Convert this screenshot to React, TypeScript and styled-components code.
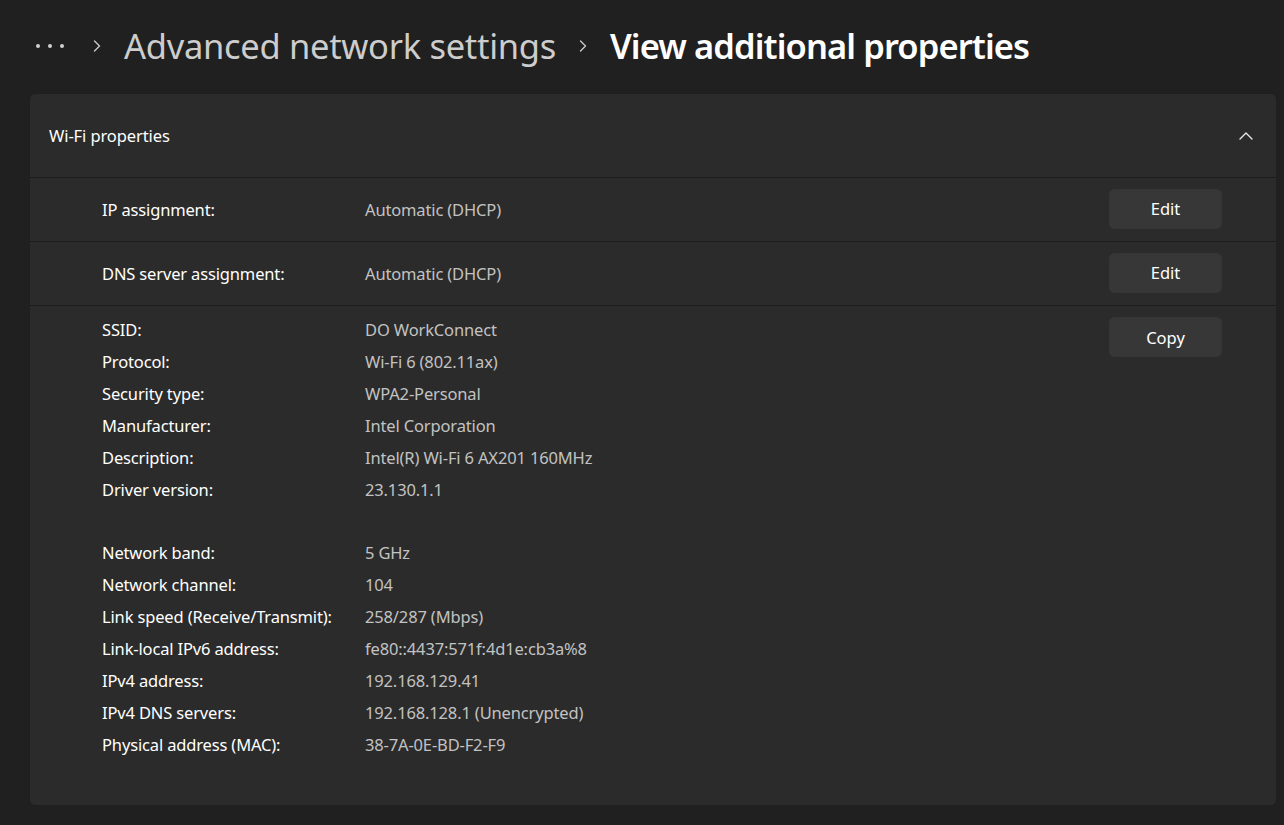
import React, { useState } from "react";
import styled, { createGlobalStyle } from "styled-components";

type Property = {
  label: string;
  value: string;
};

const GlobalStyle = createGlobalStyle`
  html, body {
    margin: 0;
    padding: 0;
    background: #202020;
  }
  body {
    font-family: "Segoe UI", "Noto Sans", "Open Sans", sans-serif;
    color: #ffffff;
    -webkit-font-smoothing: antialiased;
  }
`;

const Page = styled.div`
  width: 1284px;
  height: 825px;
  background: #202020;
  box-sizing: border-box;
  padding: 19px 7px 0 29px;
  overflow: hidden;
`;

const Breadcrumb = styled.nav`
  display: flex;
  align-items: center;
  height: 54px;
  margin-bottom: 20px;
`;

const MoreButton = styled.span`
  display: flex;
  align-items: center;
  gap: 8px;
  padding: 0 6px 0 7px;
  height: 30px;
`;

const Dot = styled.span`
  width: 4px;
  height: 4px;
  border-radius: 50%;
  background: #d0d0d0;
`;

const Crumb = styled.span<{ current?: boolean }>`
  font-size: ${({ current }) => (current ? "34.5px" : "34.5px")};
  font-weight: ${({ current }) => (current ? 600 : 400)};
  color: ${({ current }) => (current ? "#ffffff" : "#cdcdcd")};
  letter-spacing: ${({ current }) => (current ? "-0.9px" : "-0.3px")};
  line-height: 54px;
  white-space: nowrap;
`;

const Separator = styled.span`
  display: flex;
  align-items: center;
  justify-content: center;
  width: 54px;
`;

const Card = styled.section`
  width: 1248px;
  background: #2b2b2b;
  border: 1px solid #1f1f1f;
  border-radius: 6px;
  box-sizing: border-box;
`;

const CardHeader = styled.div`
  display: flex;
  align-items: center;
  justify-content: space-between;
  height: 83px;
  padding: 0 22px 0 19px;
  border-bottom: 1px solid #1c1c1c;
  font-size: 16.5px;
  letter-spacing: -0.1px;
`;

const ToggleIcon = styled.span`
  display: flex;
  width: 16px;
  justify-content: center;
`;

const Row = styled.div<{ divided?: boolean }>`
  display: flex;
  align-items: ${({ divided }) => (divided ? "center" : "flex-start")};
  min-height: ${({ divided }) => (divided ? "63px" : "auto")};
  padding: ${({ divided }) => (divided ? "0 54px 0 72px" : "8px 54px 44px 72px")};
  border-bottom: ${({ divided }) => (divided ? "1px solid #1c1c1c" : "none")};
`;

const PropertyGrid = styled.div`
  flex: 1;
  display: grid;
  grid-template-columns: 263px 1fr;
  font-size: 16.5px;
  letter-spacing: -0.15px;
  line-height: 32px;
`;

const Label = styled.span`
  color: #ffffff;
  white-space: nowrap;
`;

const Value = styled.span`
  color: #c2c2c2;
  white-space: nowrap;
`;

const Spacer = styled.div`
  grid-column: 1 / -1;
  height: 31px;
`;

const ActionButton = styled.button<{ offset?: number }>`
  width: 113px;
  height: 40px;
  margin-top: ${({ offset }) => offset ?? 0}px;
  margin-bottom: 2px;
  border: 1px solid #353535;
  border-radius: 5px;
  background: #373737;
  color: #ffffff;
  font-family: inherit;
  font-size: 16.5px;
  cursor: pointer;
  flex-shrink: 0;
`;

const ChevronRight = () => (
  <svg width="10" height="14" viewBox="0 0 10 14">
    <path d="M2.5 2 L7.5 7 L2.5 12" fill="none" stroke="#c8c8c8" strokeWidth="1.4" strokeLinecap="round" strokeLinejoin="round" />
  </svg>
);

const ChevronUp = () => (
  <svg width="16" height="10" viewBox="0 0 16 10">
    <path d="M2 8 L8 2 L14 8" fill="none" stroke="#e8e8e8" strokeWidth="1.4" strokeLinecap="round" strokeLinejoin="round" />
  </svg>
);

const adapterInfo: Property[] = [
  { label: "SSID:", value: "DO WorkConnect" },
  { label: "Protocol:", value: "Wi-Fi 6 (802.11ax)" },
  { label: "Security type:", value: "WPA2-Personal" },
  { label: "Manufacturer:", value: "Intel Corporation" },
  { label: "Description:", value: "Intel(R) Wi-Fi 6 AX201 160MHz" },
  { label: "Driver version:", value: "23.130.1.1" },
];

const connectionInfo: Property[] = [
  { label: "Network band:", value: "5 GHz" },
  { label: "Network channel:", value: "104" },
  { label: "Link speed (Receive/Transmit):", value: "258/287 (Mbps)" },
  { label: "Link-local IPv6 address:", value: "fe80::4437:571f:4d1e:cb3a%8" },
  { label: "IPv4 address:", value: "192.168.129.41" },
  { label: "IPv4 DNS servers:", value: "192.168.128.1 (Unencrypted)" },
  { label: "Physical address (MAC):", value: "38-7A-0E-BD-F2-F9" },
];

const renderProps = (items: Property[]) =>
  items.map(({ label, value }) => (
    <React.Fragment key={label}>
      <Label>{label}</Label>
      <Value>{value}</Value>
    </React.Fragment>
  ));

const App = () => {
  const [expanded] = useState(true);

  return (
    <Page>
      <GlobalStyle />
      <Breadcrumb>
        <MoreButton>
          <Dot />
          <Dot />
          <Dot />
        </MoreButton>
        <Separator>
          <ChevronRight />
        </Separator>
        <Crumb>Advanced network settings</Crumb>
        <Separator>
          <ChevronRight />
        </Separator>
        <Crumb current>View additional properties</Crumb>
      </Breadcrumb>

      <Card>
        <CardHeader>
          <span>Wi-Fi properties</span>
          <ToggleIcon>
            <ChevronUp />
          </ToggleIcon>
        </CardHeader>
        {expanded && (
          <>
            <Row divided>
              <PropertyGrid>
                <Label>IP assignment:</Label>
                <Value>Automatic (DHCP)</Value>
              </PropertyGrid>
              <ActionButton>Edit</ActionButton>
            </Row>
            <Row divided>
              <PropertyGrid>
                <Label>DNS server assignment:</Label>
                <Value>Automatic (DHCP)</Value>
              </PropertyGrid>
              <ActionButton>Edit</ActionButton>
            </Row>
            <Row>
              <PropertyGrid>
                {renderProps(adapterInfo)}
                <Spacer />
                {renderProps(connectionInfo)}
              </PropertyGrid>
              <ActionButton offset={3}>Copy</ActionButton>
            </Row>
          </>
        )}
      </Card>
    </Page>
  );
};

export default App;
